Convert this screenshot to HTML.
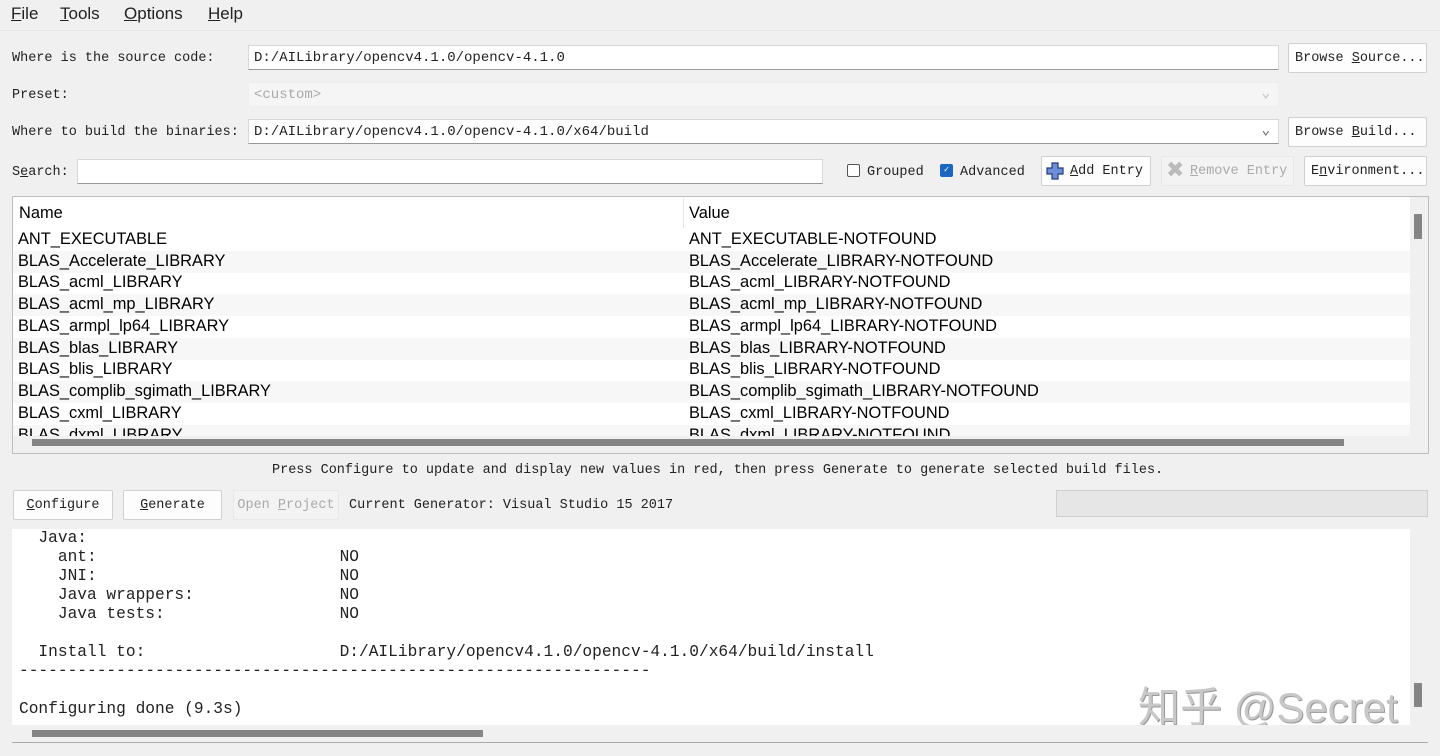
<!DOCTYPE html>
<html><head><meta charset="utf-8"><style>
*{box-sizing:border-box;margin:0;padding:0}
body{width:1440px;height:756px;background:#f0f0f0;position:relative;overflow:hidden;font-family:"Liberation Mono",monospace;font-size:13.5px;color:#222}
.a{position:absolute;white-space:pre}
.menu{font-family:"Liberation Sans",sans-serif;font-size:17px;top:4px}
.inp{position:absolute;background:#fff;border:1px solid #d8d8d8;border-bottom:1px solid #999;height:25px;padding:4px 5px;font-size:14px;white-space:pre}
.btn{position:absolute;background:#fdfdfd;border:1px solid #d0d0d0;border-radius:2px;height:30px;padding:7px 6px;font-size:13.5px;white-space:pre}
.dis{color:#aaa;background:#f3f3f3;border-color:#e8e8e8}
.sans{font-family:"Liberation Sans",sans-serif;font-size:16.4px}
.row{position:absolute;left:13px;width:1397px;height:22px}
.row span{position:absolute;top:1px;font-family:"Liberation Sans",sans-serif;font-size:16.4px;color:#000}
.out{font-size:16.2px;color:#222}
u{text-decoration:underline}
</style></head><body>
<div class="a menu" style="left:11px"><u>F</u>ile</div>
<div class="a menu" style="left:60px"><u>T</u>ools</div>
<div class="a menu" style="left:124px"><u>O</u>ptions</div>
<div class="a menu" style="left:208px"><u>H</u>elp</div>
<div style="position:absolute;left:0;top:30px;width:1440px;height:1px;background:#e6e6e6"></div>

<div class="a" style="left:12px;top:51px">Where is the source code:</div>
<div class="inp" style="left:248px;top:45px;width:1031px">D:/AILibrary/opencv4.1.0/opencv-4.1.0</div>
<div class="btn" style="left:1288px;top:43px;width:139px">Browse <u>S</u>ource...</div>

<div class="a" style="left:12px;top:88px">Preset:</div>
<div class="inp" style="left:248px;top:82px;width:1031px;background:#f5f5f5;border-color:#eee;color:#aaa">&lt;custom&gt;<span style="position:absolute;right:8px;top:2px;color:#bbb">⌄</span></div>

<div class="a" style="left:12px;top:125px">Where to build the binaries:</div>
<div class="inp" style="left:248px;top:119px;width:1031px">D:/AILibrary/opencv4.1.0/opencv-4.1.0/x64/build<span style="position:absolute;right:8px;top:2px;color:#555">⌄</span></div>
<div class="btn" style="left:1288px;top:117px;width:139px">Browse <u>B</u>uild...</div>

<div class="a" style="left:12px;top:165px">S<u>e</u>arch:</div>
<div class="inp" style="left:77px;top:159px;width:746px"></div>
<div style="position:absolute;left:847px;top:164px;width:13px;height:13px;border:1px solid #555;border-radius:2px;background:#fff"></div>
<div class="a" style="left:867px;top:165px">Grouped</div>
<div style="position:absolute;left:940px;top:164px;width:13px;height:13px;border-radius:2px;background:#1a66c0;color:#fff;font-size:9px;line-height:13px;text-align:center">✓</div>
<div class="a" style="left:960px;top:165px">Advanced</div>
<div class="btn" style="left:1041px;top:156px;width:110px;padding-left:28px"><u>A</u>dd Entry</div>
<svg style="position:absolute;left:1046px;top:162px" width="18" height="18" viewBox="0 0 18 18"><path d="M6 1h6v5h5v6h-5v5H6v-5H1V6h5z" fill="#6e8fd8" stroke="#223a80" stroke-width="1.2"/></svg>
<div class="btn dis" style="left:1161px;top:156px;width:133px;padding-left:28px"><u>R</u>emove Entry</div>
<div class="a" style="left:1166px;top:158px;color:#bbb;font-size:22px;font-family:'DejaVu Sans'">✖</div>
<div class="btn" style="left:1304px;top:156px;width:123px"><span>E<u>n</u>vironment...</span></div>

<div style="position:absolute;left:12px;top:196px;width:1417px;height:258px;border:1px solid #bdbdbd;background:#fff"></div>
<div class="a sans" style="left:19px;top:204px;color:#000">Name</div>
<div style="position:absolute;left:683px;top:198px;width:1px;height:30px;background:#e5e5e5"></div>
<div class="a sans" style="left:689px;top:204px;color:#000">Value</div>
<div style="position:absolute;left:1410px;top:197px;width:18px;height:256px;background:#f0f0f0"></div>
<div style="position:absolute;left:1414px;top:214px;width:8px;height:25px;background:#858585"></div>

<div class="row" style="top:229px"><span style="left:5px">ANT_EXECUTABLE</span><span style="left:676px">ANT_EXECUTABLE-NOTFOUND</span></div>
<div class="row" style="top:251px;background:#f7f7f7"><span style="left:5px">BLAS_Accelerate_LIBRARY</span><span style="left:676px">BLAS_Accelerate_LIBRARY-NOTFOUND</span></div>
<div class="row" style="top:272px"><span style="left:5px">BLAS_acml_LIBRARY</span><span style="left:676px">BLAS_acml_LIBRARY-NOTFOUND</span></div>
<div class="row" style="top:294px;background:#f7f7f7"><span style="left:5px">BLAS_acml_mp_LIBRARY</span><span style="left:676px">BLAS_acml_mp_LIBRARY-NOTFOUND</span></div>
<div class="row" style="top:316px"><span style="left:5px">BLAS_armpl_lp64_LIBRARY</span><span style="left:676px">BLAS_armpl_lp64_LIBRARY-NOTFOUND</span></div>
<div class="row" style="top:338px;background:#f7f7f7"><span style="left:5px">BLAS_blas_LIBRARY</span><span style="left:676px">BLAS_blas_LIBRARY-NOTFOUND</span></div>
<div class="row" style="top:359px"><span style="left:5px">BLAS_blis_LIBRARY</span><span style="left:676px">BLAS_blis_LIBRARY-NOTFOUND</span></div>
<div class="row" style="top:381px;background:#f7f7f7"><span style="left:5px">BLAS_complib_sgimath_LIBRARY</span><span style="left:676px">BLAS_complib_sgimath_LIBRARY-NOTFOUND</span></div>
<div class="row" style="top:403px"><span style="left:5px">BLAS_cxml_LIBRARY</span><span style="left:676px">BLAS_cxml_LIBRARY-NOTFOUND</span></div>
<div class="row" style="top:425px;height:11px;overflow:hidden;background:#f7f7f7"><span style="left:5px">BLAS_dxml_LIBRARY</span><span style="left:676px">BLAS_dxml_LIBRARY-NOTFOUND</span></div>
<div style="position:absolute;left:13px;top:436px;width:1397px;height:17px;background:#f0f0f0"></div>
<div style="position:absolute;left:32px;top:439px;width:1312px;height:7px;background:#858585"></div>

<div class="a" style="left:272px;top:463px;font-size:13.5px">Press Configure to update and display new values in red, then press Generate to generate selected build files.</div>

<div class="btn" style="left:13px;top:490px;width:100px;text-align:center"><u>C</u>onfigure</div>
<div class="btn" style="left:123px;top:490px;width:99px;text-align:center"><u>G</u>enerate</div>
<div class="btn dis" style="left:233px;top:490px;width:106px;text-align:center;padding:7px 2px">Open <u>P</u>roject</div>
<div class="a" style="left:349px;top:498px;font-size:13.5px">Current Generator: Visual Studio 15 2017</div>
<div style="position:absolute;left:1056px;top:490px;width:372px;height:27px;background:#e6e6e6;border:1px solid #cfcfcf"></div>

<div style="position:absolute;left:12px;top:529px;width:1398px;height:196px;background:#fff"></div>
<div style="position:absolute;left:1410px;top:529px;width:18px;height:196px;background:#f0f0f0"></div>
<div style="position:absolute;left:1414px;top:683px;width:8px;height:24px;background:#858585"></div>
<div class="a out" style="left:19px;top:529px;line-height:19px">  Java:
    ant:                         NO
    JNI:                         NO
    Java wrappers:               NO
    Java tests:                  NO

  Install to:                    D:/AILibrary/opencv4.1.0/opencv-4.1.0/x64/build/install
-----------------------------------------------------------------

Configuring done (9.3s)</div>
<div class="a" style="left:1138px;top:674px;font-family:'Liberation Sans','Noto Sans CJK SC',sans-serif;font-size:42px;color:#c8c8c8;text-shadow:1px 1px 0 #999">知乎 @Secret</div>
<div style="position:absolute;left:12px;top:725px;width:1416px;height:17px;background:#f0f0f0"></div>
<div style="position:absolute;left:32px;top:730px;width:451px;height:7px;background:#858585"></div>
<div style="position:absolute;left:12px;top:742px;width:1416px;height:1px;background:#aaa"></div>
</body></html>
